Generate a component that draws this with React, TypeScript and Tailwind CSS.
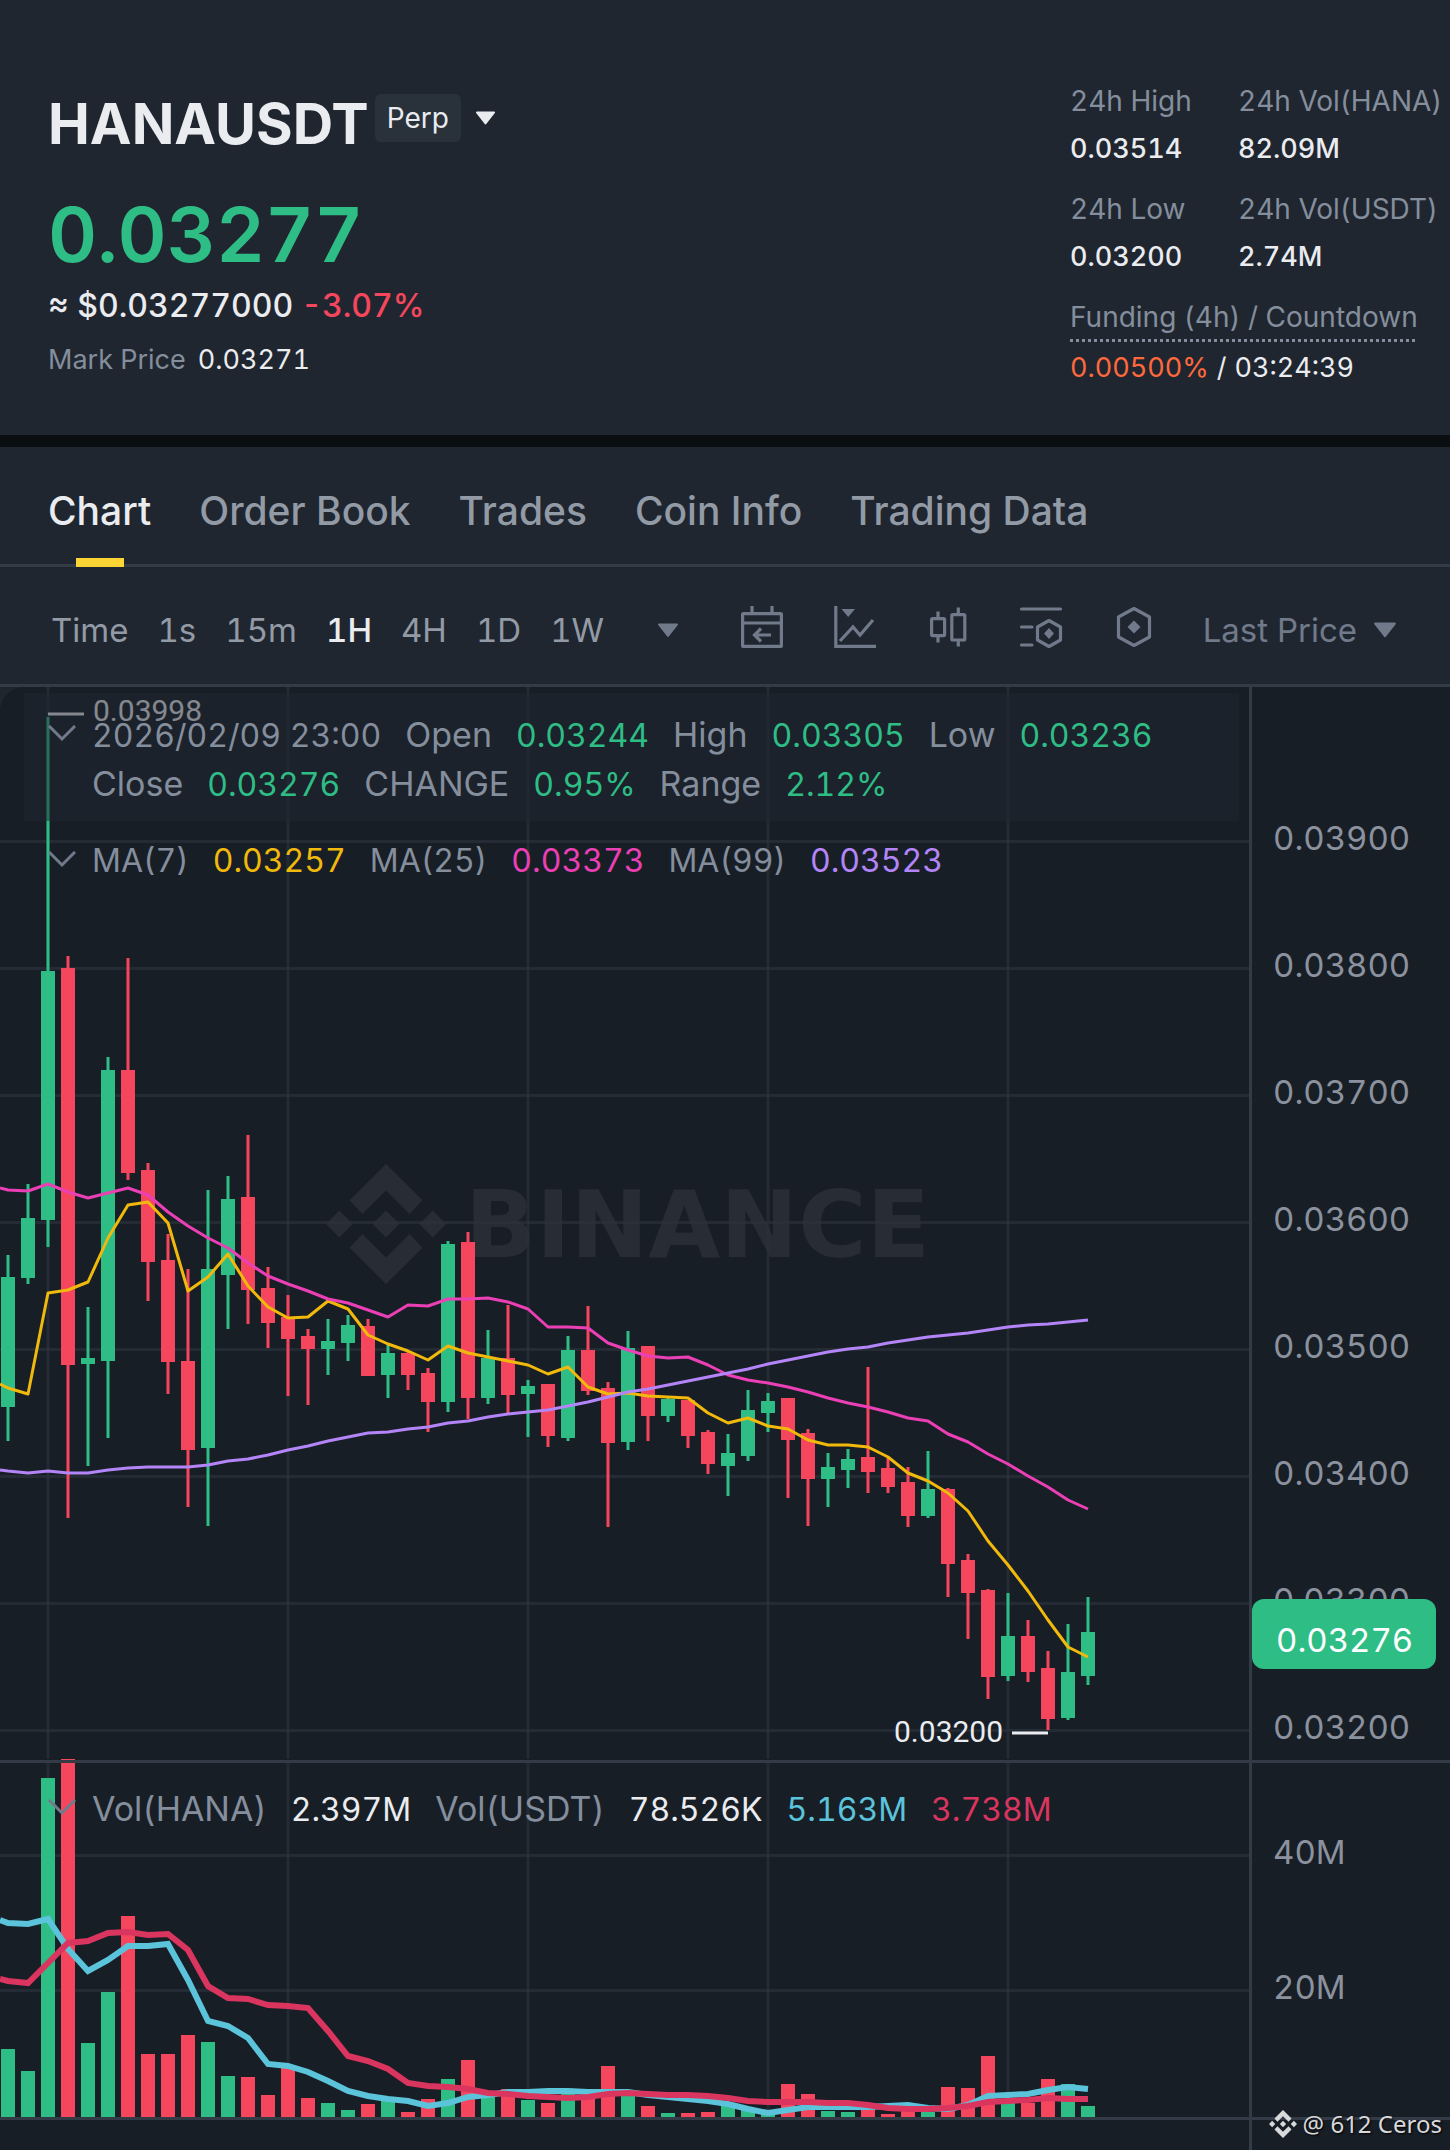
import React, { useState } from "react";

// [up, high, low, top, bottom, volumeTop]
type Candle = [number, number, number, number, number, number];

const STEP = 20;
const FIRST_X = 8;
const VOLUME_BASE = 2117;

const candles: Candle[] = [
  [1, 1255, 1441, 1277, 1407, 2049],
  [1, 1184, 1284, 1218, 1278, 2071],
  [1, 717, 1247, 971, 1220, 1778],
  [0, 956, 1518, 968, 1365, 1759],
  [1, 1307, 1466, 1358, 1364, 2043],
  [1, 1057, 1438, 1070, 1361, 1992],
  [0, 958, 1180, 1070, 1173, 1916],
  [0, 1163, 1301, 1170, 1262, 2054],
  [0, 1234, 1394, 1260, 1362, 2054],
  [0, 1269, 1507, 1361, 1450, 2035],
  [1, 1190, 1526, 1269, 1448, 2042],
  [1, 1176, 1329, 1199, 1275, 2076],
  [0, 1135, 1324, 1197, 1290, 2077],
  [0, 1267, 1348, 1288, 1323, 2095],
  [0, 1295, 1396, 1317, 1339, 2068],
  [0, 1329, 1405, 1336, 1349, 2098],
  [1, 1319, 1375, 1341, 1349, 2103],
  [1, 1315, 1361, 1325, 1343, 2110],
  [0, 1319, 1376, 1326, 1376, 2104],
  [1, 1344, 1398, 1353, 1375, 2099],
  [0, 1352, 1390, 1353, 1375, 2112],
  [0, 1368, 1432, 1373, 1402, 2099],
  [1, 1241, 1412, 1244, 1402, 2079],
  [0, 1232, 1419, 1242, 1398, 2060],
  [1, 1330, 1404, 1358, 1398, 2097],
  [0, 1305, 1413, 1358, 1395, 2089],
  [1, 1380, 1437, 1386, 1394, 2100],
  [0, 1384, 1447, 1384, 1436, 2103],
  [1, 1336, 1441, 1350, 1438, 2093],
  [0, 1306, 1395, 1350, 1391, 2098],
  [0, 1382, 1527, 1388, 1443, 2066],
  [1, 1331, 1450, 1348, 1442, 2095],
  [0, 1346, 1441, 1346, 1416, 2106],
  [1, 1398, 1422, 1399, 1416, 2113],
  [0, 1400, 1448, 1400, 1436, 2113],
  [0, 1430, 1474, 1432, 1464, 2112],
  [1, 1434, 1496, 1453, 1466, 2105],
  [1, 1390, 1461, 1410, 1456, 2108],
  [1, 1393, 1432, 1401, 1413, 2114],
  [0, 1398, 1498, 1398, 1440, 2084],
  [0, 1429, 1526, 1433, 1479, 2094],
  [1, 1453, 1507, 1467, 1479, 2111],
  [1, 1449, 1488, 1459, 1470, 2112],
  [0, 1367, 1493, 1457, 1472, 2107],
  [0, 1458, 1493, 1468, 1487, 2114],
  [0, 1467, 1527, 1482, 1516, 2110],
  [1, 1451, 1518, 1489, 1516, 2112],
  [0, 1488, 1597, 1489, 1564, 2087],
  [0, 1554, 1639, 1560, 1593, 2088],
  [0, 1589, 1699, 1590, 1677, 2056],
  [1, 1593, 1681, 1636, 1676, 2103],
  [0, 1620, 1682, 1636, 1672, 2103],
  [0, 1651, 1730, 1668, 1719, 2079],
  [1, 1624, 1720, 1672, 1718, 2084],
  [1, 1597, 1685, 1632, 1676, 2106],
];

const ma7 = [
  1388, 1394, 1293, 1290, 1282, 1238, 1205, 1202, 1223, 1291, 1277, 1254, 1286,
  1307, 1318, 1317, 1301, 1309, 1335, 1344, 1351, 1360, 1346, 1353, 1357, 1361,
  1365, 1374, 1367, 1387, 1394, 1393, 1396, 1397, 1398, 1413, 1423, 1418, 1426,
  1429, 1440, 1445, 1445, 1447, 1457, 1473, 1481, 1493, 1511, 1541, 1565, 1591,
  1620, 1647, 1657,
];
const ma25 = [
  1190, 1191, 1184, 1192, 1198, 1193, 1188, 1195, 1212, 1226, 1238, 1248, 1263,
  1276, 1284, 1291, 1299, 1303, 1310, 1317, 1305, 1306, 1299, 1299, 1298, 1302,
  1309, 1327, 1327, 1328, 1343, 1350, 1356, 1358, 1357, 1365, 1375, 1380, 1383,
  1387, 1392, 1398, 1403, 1407, 1412, 1418, 1421, 1434, 1442, 1454, 1464, 1476,
  1487, 1500, 1509,
];
const ma99 = [
  1471, 1473, 1471, 1473, 1473, 1470, 1468, 1467, 1467, 1467, 1465, 1461, 1459,
  1455, 1450, 1446, 1441, 1437, 1433, 1432, 1429, 1427, 1423, 1421, 1417, 1414,
  1412, 1410, 1406, 1402, 1397, 1392, 1389, 1385, 1381, 1377, 1373, 1369, 1364,
  1360, 1356, 1352, 1349, 1347, 1343, 1340, 1337, 1335, 1333, 1330, 1327, 1325,
  1324, 1322, 1320,
];
const volFast = [
  1923, 1924, 1919, 1949, 1971, 1960, 1946, 1946, 1944, 1980, 2021, 2026, 2038,
  2064, 2066, 2072, 2081, 2091, 2096, 2099, 2101, 2106, 2103, 2097, 2095, 2092,
  2092, 2091, 2091, 2092, 2092, 2092, 2095, 2097, 2099, 2101, 2104, 2109, 2113,
  2110, 2107, 2107, 2107, 2107, 2106, 2105, 2108, 2109, 2105, 2096, 2095, 2094,
  2090, 2087, 2089,
];
const volSlow = [
  1981, 1983, 1963, 1943, 1941, 1933, 1932, 1935, 1934, 1950, 1986, 1998, 1999,
  2005, 2006, 2008, 2031, 2056, 2061, 2069, 2083, 2086, 2087, 2089, 2093, 2094,
  2096, 2097, 2098, 2097, 2094, 2093, 2094, 2095, 2095, 2096, 2098, 2101, 2102,
  2102, 2102, 2103, 2103, 2105, 2108, 2109, 2109, 2108, 2106, 2102, 2101, 2100,
  2098, 2099, 2099,
];

const priceTicks = [
  { label: "0.03900", y: 841 },
  { label: "0.03800", y: 968 },
  { label: "0.03700", y: 1095 },
  { label: "0.03600", y: 1222 },
  { label: "0.03500", y: 1349 },
  { label: "0.03400", y: 1476 },
  { label: "0.03300", y: 1603 },
  { label: "0.03200", y: 1730 },
];
const volumeTicks = [
  { label: "40M", y: 1855 },
  { label: "20M", y: 1990 },
];
const timeTicks = [48, 288, 528, 768, 1008];

const toPoints = (start: number, ys: number[]) =>
  [`0,${start}`, ...ys.map((y, i) => `${FIRST_X + i * STEP},${y}`)].join(" ");

const LOGO_PATH =
  "M0-60 36.5-23.7 23.7-10 0-33.5-23.7-10-36.5-23.7ZM0 60 36.5 23.7 23.7 10 0 33.5-23.7 10-36.5 23.7ZM0-13.4 13.4 0 0 13.4-13.4 0ZM46.6-13.4 60 0 46.6 13.4 33.2 0ZM-46.6-13.4-33.2 0-46.6 13.4-60 0Z";

function Caret({ className }: { className: string }) {
  return (
    <svg viewBox="0 0 22 15" className={className} aria-hidden="true">
      <path
        d="M2 1.5H20L11 13Z"
        fill="currentColor"
        stroke="currentColor"
        strokeWidth="2"
        strokeLinejoin="round"
      />
    </svg>
  );
}

function Chevron() {
  return (
    <svg
      viewBox="0 0 28 18"
      className="w-7 shrink-0 text-[#707a8a]"
      fill="none"
      stroke="currentColor"
      strokeWidth="3"
      aria-hidden="true"
    >
      <path d="M1 1 14 14 27 1" />
    </svg>
  );
}

function ToolIcon({
  label,
  children,
}: {
  label: string;
  children: React.ReactNode;
}) {
  return (
    <button type="button" aria-label={label} className="shrink-0">
      <svg
        viewBox="0 0 48 48"
        className="size-12"
        fill="none"
        stroke="currentColor"
        strokeWidth="3.2"
      >
        {children}
      </svg>
    </button>
  );
}

function Stat({ label, value }: { label: string; value: string }) {
  return (
    <div>
      <dt className="text-[28px] text-[#848e9c]">{label}</dt>
      <dd className="mt-3 font-medium">{value}</dd>
    </div>
  );
}

function Header() {
  return (
    <header className="flex items-start justify-between pb-[49px] pl-12">
      <div className="pt-[94px]">
        <div className="flex items-start">
          <h1 className="text-[56px] leading-[60px] font-bold">HANAUSDT</h1>
          <button type="button" className="ml-1.5 flex items-center gap-3.5">
            <span className="rounded-md bg-[#29313b] px-3 text-[28px] leading-[48px]">
              Perp
            </span>
            <Caret className="w-[21px]" />
          </button>
        </div>
        <p className="mt-10 text-[76px] leading-[80px] font-semibold text-[#2ebd85]">
          0.03277
        </p>
        <p className="mt-3 flex gap-2 text-[32px] leading-[40px] font-medium">
          <span>≈ $0.03277000</span>
          <span className="text-[#f6465d]">-3.07%</span>
        </p>
        <p className="mt-4 flex gap-3 text-[27px] leading-[36px]">
          <span className="text-[#848e9c]">Mark Price</span>
          <span>0.03271</span>
        </p>
      </div>

      <div className="w-[380px] pt-[83px] text-[27px] leading-[36px] whitespace-nowrap">
        <dl className="grid grid-cols-[168px_auto] gap-y-6">
          <Stat label="24h High" value="0.03514" />
          <Stat label="24h Vol(HANA)" value="82.09M" />
          <Stat label="24h Low" value="0.03200" />
          <Stat label="24h Vol(USDT)" value="2.74M" />
        </dl>
        <div className="mt-6 inline-block">
          <p className="pb-1 text-[28px] text-[#848e9c]">
            Funding (4h) / Countdown
          </p>
          <div className="h-[3px] bg-[repeating-linear-gradient(90deg,#848e9c_0_3px,transparent_3px_6px)]" />
          <p className="mt-2 flex gap-2">
            <span className="text-[#ff693d]">0.00500%</span>
            <span>/</span>
            <span>03:24:39</span>
          </p>
        </div>
      </div>
    </header>
  );
}

const tabs = ["Chart", "Order Book", "Trades", "Coin Info", "Trading Data"];

function Tabs() {
  const [active, setActive] = useState("Chart");

  return (
    <nav className="flex gap-12 border-t-12 border-b-3 border-t-[#0b0e11] border-b-[#333b47] px-12 pt-10 text-[39px] leading-[48px] font-medium whitespace-nowrap">
      {tabs.map((tab) => (
        <button
          key={tab}
          type="button"
          onClick={() => setActive(tab)}
          className={
            tab === active
              ? "relative pb-[29px]"
              : "relative pb-[29px] text-[#929aa5]"
          }
        >
          {tab}
          {tab === active && (
            <span className="absolute -bottom-[3px] left-1/2 h-[9px] w-12 -translate-x-1/2 bg-[#fcd535]" />
          )}
        </button>
      ))}
    </nav>
  );
}

const intervals = ["Time", "1s", "15m", "1H", "4H", "1D", "1W"];

function Toolbar() {
  const [interval, setInterval] = useState("1H");

  return (
    <div className="flex items-start justify-between border-b-3 border-[#333b47] pt-9 pr-[53px] pb-[27px] pl-[51px] text-[33px] leading-[54px] whitespace-nowrap text-[#707a8a]">
      <div className="flex gap-[29px] text-[#929aa5]">
        {intervals.map((item) => (
          <button
            key={item}
            type="button"
            onClick={() => setInterval(item)}
            className={item === interval ? "font-medium text-[#eaecef]" : ""}
          >
            {item}
          </button>
        ))}
        <button
          type="button"
          aria-label="More intervals"
          className="ml-6 text-[#707a8a]"
        >
          <Caret className="w-[22px]" />
        </button>
      </div>

      <div className="flex items-start gap-[45px]">
        <ToolIcon label="Go to date">
          <rect x="4.6" y="10.6" width="38.8" height="32.8" rx="1" />
          <path d="M4 20H44M14 10V3M34 10V3M33 32H17M23 25.5 16.5 32 23 38.5" />
        </ToolIcon>
        <ToolIcon label="Drawing tools">
          <path d="M4.8 3V43.4H45M9 38 22 24 29 32 42 17" />
          <path d="M10.5 6H24L17.2 14Z" fill="currentColor" stroke="none" />
        </ToolIcon>
        <ToolIcon label="Chart style">
          <rect x="7.6" y="15.6" width="13" height="17" rx="1" />
          <rect x="27.8" y="11.6" width="13" height="25.4" rx="1" />
          <path d="M14 15V8.500M14 33V39.500M34.300 11V4.500M34.300 37V43.500" />
        </ToolIcon>
        <ToolIcon label="Indicators">
          <path
            d="M4.500 6H43.500M4.500 24H15M4.500 42H15"
            strokeLinecap="round"
          />
          <path
            d="M32 17.500 43.500 24V37L32 43.500 20.500 37V24Z"
            strokeLinejoin="round"
          />
          <path
            d="M32 25 37 30.500 32 36 27 30.500Z"
            fill="currentColor"
            stroke="none"
          />
        </ToolIcon>
        <ToolIcon label="Settings">
          <path
            d="M24 5.500 39.500 14V34L24 42.500 8.500 34V14Z"
            strokeLinejoin="round"
          />
          <path
            d="M24 17.500 30.500 24 24 30.500 17.500 24Z"
            fill="currentColor"
            stroke="none"
          />
        </ToolIcon>
        <button type="button" className="flex items-center gap-4">
          Last Price
          <Caret className="w-6" />
        </button>
      </div>
    </div>
  );
}

function Plot() {
  return (
    <svg
      viewBox="0 687 1450 1463"
      className="block w-full rounded-tl-3xl bg-[#181e26]"
      role="img"
      aria-label="HANAUSDT price and volume"
    >
      <g fill="#282c34">
        <path d={LOGO_PATH} transform="translate(386 1224)" />
        <text
          x="465"
          y="1257"
          className="font-['DejaVu_Sans',sans-serif] text-[93px] font-bold"
        >
          BINANCE
        </text>
      </g>

      <g stroke="#2b323c" strokeOpacity="0.65" strokeWidth="3">
        {timeTicks.map((x) => (
          <path key={x} d={`M${x} 687V1759M${x} 1763V2117`} />
        ))}
        {[...priceTicks, ...volumeTicks].map(({ y }) => (
          <path key={y} d={`M0 ${y + 0.5}H1249`} />
        ))}
      </g>

      {candles.map(([up, high, low, top, bottom, volumeTop], i) => {
        const x = FIRST_X + i * STEP;
        return (
          <g key={x} fill={up ? "#2ebd85" : "#f6465d"}>
            <rect x={x - 1.5} y={high} width="3" height={low - high} />
            <rect x={x - 7} y={top} width="14" height={bottom - top} />
            <rect
              x={x - 7}
              y={volumeTop}
              width="14"
              height={VOLUME_BASE - volumeTop}
            />
          </g>
        );
      })}

      <g fill="none" strokeWidth="3" strokeLinejoin="round">
        <polyline points={toPoints(1384, ma7)} stroke="#f0b90b" />
        <polyline points={toPoints(1188, ma25)} stroke="#eb40b5" />
        <polyline points={toPoints(1470, ma99)} stroke="#b385f8" />
      </g>
      <g fill="none" strokeWidth="6">
        <polyline points={toPoints(1920, volFast)} stroke="#5bc3da" />
        <polyline points={toPoints(1979, volSlow)} stroke="#d9355f" />
      </g>

      <g stroke="#333b47" strokeWidth="3">
        <path d="M1250.500 687V2150M0 1761.500H1450M0 2118.500H1450" />
      </g>

      <g className="font-['Roboto',sans-serif] text-[30px]" fill="#eaecef">
        <path d="M48 714H84M1012 1733H1048" stroke="#eaecef" strokeWidth="3" />
        <text x="93" y="721">
          0.03998
        </text>
        <text x="894" y="1742">
          0.03200
        </text>
      </g>

      <g fill="#8b929e" className="text-[33px] tabular-nums">
        {[...priceTicks, ...volumeTicks].map(({ label, y }) => (
          <text key={label} x="1273" y={y + 9}>
            {label}
          </text>
        ))}
      </g>
      <rect x="1252" y="1599" width="184" height="70" rx="12" fill="#2ebd85" />
      <text x="1276" y="1652" fill="#fff" className="text-[33px] tabular-nums">
        0.03276
      </text>
    </svg>
  );
}

type LegendItem = { name?: string; value: string; tone: string };

function Legend({
  items,
  labelSize = "text-[34px]",
}: {
  items: LegendItem[];
  labelSize?: string;
}) {
  return (
    <dl className="flex items-baseline gap-6">
      {items.map(({ name, value, tone }) => (
        <div key={value} className="flex items-baseline gap-6">
          {name && <dt className={`text-[#848e9c] ${labelSize}`}>{name}</dt>}
          <dd className={tone}>{value}</dd>
        </div>
      ))}
    </dl>
  );
}

const UP = "text-[#2ebd85]";
const LIGHT = "text-[#eaecef]";

function ChartPanel() {
  return (
    <section className="relative text-[32px] leading-[48px] whitespace-nowrap">
      <Plot />

      <div className="absolute top-1.5 right-[211px] left-6 flex items-start gap-4 bg-[#202630]/50 pt-[18px] pb-3 pl-6">
        <button
          type="button"
          aria-label="Collapse candle details"
          className="pt-3.5"
        >
          <Chevron />
        </button>
        <div>
          <div className="flex items-baseline gap-6">
            <span className="text-[#848e9c]">2026/02/09 23:00</span>
            <Legend
              items={[
                { name: "Open", value: "0.03244", tone: UP },
                { name: "High", value: "0.03305", tone: UP },
                { name: "Low", value: "0.03236", tone: UP },
              ]}
            />
          </div>
          <Legend
            items={[
              { name: "Close", value: "0.03276", tone: UP },
              { name: "CHANGE", value: "0.95%", tone: UP },
              { name: "Range", value: "2.12%", tone: UP },
            ]}
          />
        </div>
      </div>

      <div className="absolute top-[150px] left-12 flex items-start gap-4">
        <button
          type="button"
          aria-label="Collapse moving averages"
          className="pt-3.5"
        >
          <Chevron />
        </button>
        <Legend
          labelSize="text-[32px]"
          items={[
            { name: "MA(7)", value: "0.03257", tone: "text-[#f0b90b]" },
            { name: "MA(25)", value: "0.03373", tone: "text-[#eb40b5]" },
            { name: "MA(99)", value: "0.03523", tone: "text-[#b385f8]" },
          ]}
        />
      </div>

      <div className="absolute top-[1098px] left-12 flex items-start gap-4">
        <button type="button" aria-label="Collapse volume" className="pt-3.5">
          <Chevron />
        </button>
        <Legend
          labelSize="text-[34px]"
          items={[
            { name: "Vol(HANA)", value: "2.397M", tone: LIGHT },
            { name: "Vol(USDT)", value: "78.526K", tone: LIGHT },
            { value: "5.163M", tone: "text-[#5bc3da]" },
            { value: "3.738M", tone: "text-[#d9355f]" },
          ]}
        />
      </div>

      <div className="absolute right-2 bottom-2.5 flex items-center gap-1.5 font-['Noto_Sans',sans-serif] text-[24px] leading-8 text-[#d8d9db] [text-shadow:1px_1px_2px_#000]">
        <svg viewBox="-60 -60 120 120" className="size-7" aria-hidden="true">
          <path d={LOGO_PATH} fill="currentColor" />
        </svg>
        @ 612 Ceros
      </div>
    </section>
  );
}

export default function App() {
  return (
    <main className="min-h-screen bg-[#202630] font-['Inter',sans-serif] text-[#eaecef] tabular-nums">
      <Header />
      <Tabs />
      <Toolbar />
      <ChartPanel />
    </main>
  );
}
